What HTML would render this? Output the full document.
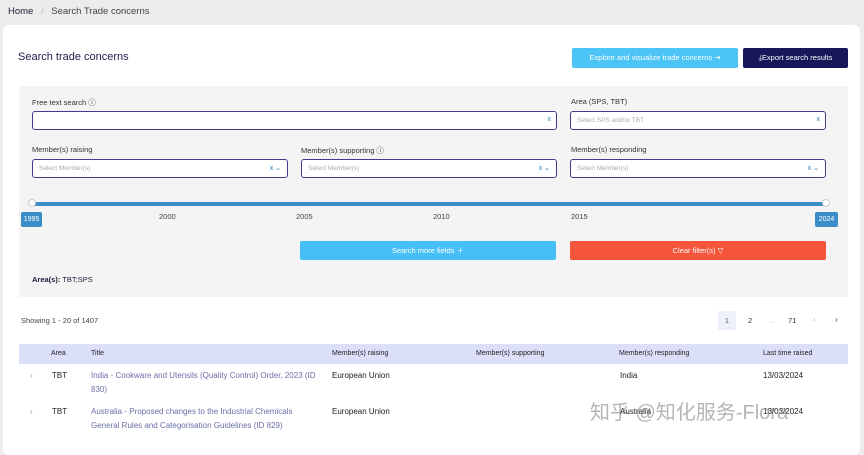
<!DOCTYPE html>
<html><head><meta charset="utf-8"><style>
*{box-sizing:border-box;margin:0;padding:0}
body{width:864px;height:442px;overflow:hidden;background:#ececec;font-family:"Liberation Sans",sans-serif;color:#1d1d3b;position:relative}
.a{position:absolute}
.card{left:3px;top:25px;width:857px;height:430px;background:#fff;border-radius:6px}
.panel{left:19px;top:86px;width:829px;height:211px;background:#f4f4f5}
.lbl{font-size:7.5px;color:#333}
.inp{background:#fff;border:1px solid #3d3f8e;border-radius:3px;height:19px;font-size:6.5px;color:#aab;padding:5px 6px}
.x{position:absolute;font-size:7px;color:#2a7fb8;top:4px}
.btn{color:#fff;font-size:7.5px;text-align:center;border-radius:2px}
.yr{font-size:7.5px;color:#444;top:212px}
.th{font-size:7px;color:#222;top:350px}
.td{font-size:8px;color:#222}
.lnk{font-size:8px;color:#6a6fa8;line-height:14px}
</style></head><body>
<div class="a" style="left:8px;top:6px;font-size:9.5px;color:#1d1d3b">Home <span style="color:#bbb;margin:0 5px">/</span> <span style="color:#444">Search Trade concerns</span></div>
<div class="a card"></div>
<div class="a" style="left:18px;top:51px;font-size:11px;color:#1d1d4b">Search trade concerns</div>
<div class="a btn" style="left:572px;top:48px;width:166px;height:20px;background:#4cc4f5;line-height:20px">Explore and visualize trade concerns ⇥</div>
<div class="a btn" style="left:743px;top:48px;width:105px;height:20px;background:#17175a;line-height:20px">⤓Export search results</div>
<div class="a panel"></div>
<div class="a lbl" style="left:32px;top:97px">Free text search ⓘ</div>
<div class="a inp" style="left:32px;top:111px;width:525px"><span class="x" style="right:5px">x</span></div>
<div class="a lbl" style="left:571px;top:97px">Area (SPS, TBT)</div>
<div class="a inp" style="left:570px;top:111px;width:256px">Select SPS and/or TBT<span class="x" style="right:5px">x</span></div>
<div class="a lbl" style="left:32px;top:145px">Member(s) raising</div>
<div class="a inp" style="left:32px;top:159px;width:256px">Select Member(s)<span class="x" style="right:6px">x ⌄</span></div>
<div class="a lbl" style="left:301px;top:145px">Member(s) supporting ⓘ</div>
<div class="a inp" style="left:301px;top:159px;width:256px">Select Member(s)<span class="x" style="right:6px">x ⌄</span></div>
<div class="a lbl" style="left:571px;top:145px">Member(s) responding</div>
<div class="a inp" style="left:570px;top:159px;width:256px">Select Member(s)<span class="x" style="right:6px">x ⌄</span></div>
<div class="a" style="left:31px;top:202px;width:796px;height:4px;background:#3a8dc7"></div>
<div class="a" style="left:28px;top:199px;width:8px;height:8px;border-radius:50%;background:#fff;border:1px solid #ccc"></div>
<div class="a" style="left:822px;top:199px;width:8px;height:8px;border-radius:50%;background:#fff;border:1px solid #ccc"></div>
<div class="a btn" style="left:21px;top:212px;width:21px;height:15px;background:#3a8dc7;line-height:15px;font-size:7px">1995</div>
<div class="a btn" style="left:815px;top:212px;width:23px;height:15px;background:#3a8dc7;line-height:15px;font-size:7px">2024</div>
<div class="a yr" style="left:159px">2000</div>
<div class="a yr" style="left:296px">2005</div>
<div class="a yr" style="left:433px">2010</div>
<div class="a yr" style="left:571px">2015</div>
<div class="a btn" style="left:300px;top:241px;width:256px;height:19px;background:#45bff5;line-height:19px">Search more fields ＋</div>
<div class="a btn" style="left:570px;top:241px;width:256px;height:19px;background:#f5553a;line-height:19px">Clear filter(s) ▽</div>
<div class="a" style="left:32px;top:275px;font-size:7.5px"><b>Area(s):</b> TBT;SPS</div>
<div class="a" style="left:21px;top:316px;font-size:7.5px;color:#444">Showing 1 - 20 of 1407</div>
<div class="a" style="left:718px;top:311px;width:18px;height:19px;background:#eef0fa;font-size:7.5px;text-align:center;line-height:19px;color:#666">1</div>
<div class="a" style="left:748px;top:316px;font-size:7.5px;color:#333">2</div>
<div class="a" style="left:769px;top:316px;font-size:7.5px;color:#aaa">..</div>
<div class="a" style="left:788px;top:316px;font-size:7.5px;color:#333">71</div>
<div class="a" style="left:813px;top:315px;font-size:8px;color:#aaa">‹</div>
<div class="a" style="left:835px;top:315px;font-size:8px;color:#333">›</div>
<div class="a" style="left:19px;top:344px;width:829px;height:20px;background:#dcdff8"></div>
<div class="a th" style="left:51px">Area</div>
<div class="a th" style="left:91px">Title</div>
<div class="a th" style="left:332px">Member(s) raising</div>
<div class="a th" style="left:476px">Member(s) supporting</div>
<div class="a th" style="left:619px">Member(s) responding</div>
<div class="a th" style="left:763px">Last time raised</div>
<div class="a td" style="left:30px;top:371px;color:#999">›</div>
<div class="a td" style="left:52px;top:371px">TBT</div>
<div class="a lnk" style="left:91px;top:369px;width:228px">India - Cookware and Utensils (Quality Control) Order, 2023 (ID 830)</div>
<div class="a td" style="left:332px;top:371px">European Union</div>
<div class="a td" style="left:620px;top:371px">India</div>
<div class="a td" style="left:763px;top:371px">13/03/2024</div>
<div class="a td" style="left:30px;top:407px;color:#999">›</div>
<div class="a td" style="left:52px;top:407px">TBT</div>
<div class="a lnk" style="left:91px;top:405px;width:228px">Australia - Proposed changes to the Industrial Chemicals General Rules and Categorisation Guidelines (ID 829)</div>
<div class="a td" style="left:332px;top:407px">European Union</div>
<div class="a td" style="left:620px;top:407px">Australia</div>
<div class="a td" style="left:763px;top:407px">13/03/2024</div>
<div class="a" style="left:590px;top:396px;font-size:20px;color:rgba(120,120,120,0.55);font-family:'Liberation Sans','Noto Sans CJK SC',sans-serif">知乎 @知化服务-Flora</div>
</body></html>
